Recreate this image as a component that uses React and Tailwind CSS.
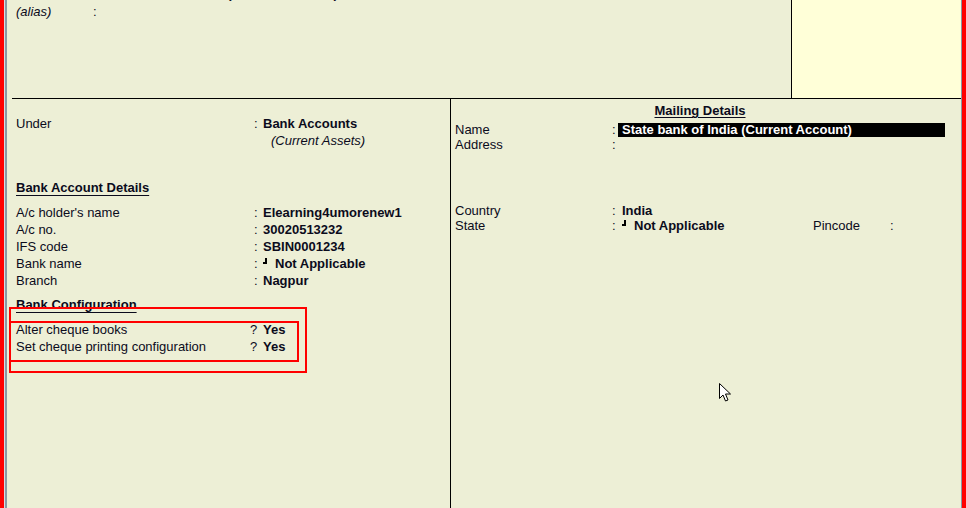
import React from 'react';

const font = { fontFamily: '"Liberation Sans", Arial, sans-serif' };

const Row = ({ label, sep = ':', children, labelW = 'w-[238px]' }) => (
  <div className="flex h-[17px] items-center leading-[17px]">
    <span className={`${labelW} shrink-0`}>{label}</span>
    <span className="w-[9px] shrink-0">{sep}</span>
    <span className="font-bold">{children}</span>
  </div>
);

// small "┘" marker Tally shows before lookup values
const Lookup = ({ children }) => (
  <>
    <span className="relative -top-[4px] mr-[8px] inline-block h-[6px] w-[4px] border-b-2 border-r-2 border-black align-middle" />
    {children}
  </>
);

const MailRow = ({ label, children }) => (
  <div className="flex h-[15px] items-center leading-[15px]">
    <span className="w-[157px] shrink-0">{label}</span>
    <span className="w-[6px] shrink-0">:</span>
    {children}
  </div>
);

const Cursor = () => (
  <svg className="absolute left-[719px] top-[383px]" width="13" height="21" viewBox="0 0 13 21">
    <path
      d="M0.5 0.5 L0.5 15.5 L4 12 L6.5 18 L9 17 L6.5 11 L11.5 11 Z"
      fill="#ffffff"
      stroke="#000000"
      strokeWidth="1"
      strokeLinejoin="miter"
    />
  </svg>
);

export default function App() {
  return (
    <div
      className="relative flex h-[508px] w-[966px] overflow-hidden bg-[#edefd6] text-[13px] text-[#0b0b1c]"
      style={font}
    >
      {/* left window frame */}
      <div className="w-[4px] shrink-0 bg-[#ff0000]" />
      <div className="w-[1px] shrink-0 bg-[#d8dce0]" />
      <div className="w-[2px] shrink-0 bg-[#8a97a4]" />

      <div className="flex min-w-0 flex-1 flex-col">
        {/* top: name / alias */}
        <div className="flex h-[98px] shrink-0">
          <div className="flex-1 overflow-hidden pl-[9px]">
            <div className="-mt-[15px] flex h-[17px] items-center leading-[17px]">
              <span className="w-[77px] shrink-0 font-bold">Name</span>
              <span className="w-[15px] shrink-0 font-bold">:</span>
              <span className="font-bold">State bank of India (Current Account)</span>
            </div>
            <div className="mt-[1px] flex h-[17px] items-center leading-[17px]">
              <span className="w-[77px] shrink-0 italic">(alias)</span>
              <span>:</span>
            </div>
          </div>
          <div className="w-[170px] shrink-0 border-l border-black bg-[#ffffd8]" />
        </div>
        <div className="ml-[5px] h-[1px] shrink-0 bg-black" />

        {/* bottom panels */}
        <div className="ml-[5px] flex flex-1">
          {/* left panel */}
          <div className="w-[439px] shrink-0 border-r border-black pl-[4px] pt-[16px]">
            <Row label="Under">Bank Accounts</Row>
            <div className="h-[17px] pl-[255px] italic leading-[17px]">(Current Assets)</div>

            <div className="mt-[30px] h-[17px] font-bold leading-[17px]">
              <span className="underline decoration-1 underline-offset-[3px]">Bank Account Details</span>
            </div>
            <div className="mt-[8px]">
              <Row label="A/c holder's name">Elearning4umorenew1</Row>
              <Row label="A/c no.">30020513232</Row>
              <Row label="IFS code">SBIN0001234</Row>
              <Row label="Bank name">
                <Lookup>Not Applicable</Lookup>
              </Row>
              <Row label="Branch">Nagpur</Row>
            </div>

            <div className="mt-[7px] h-[17px] font-bold leading-[17px]">
              <span className="underline decoration-1 underline-offset-[3px]">Bank Configuration</span>
            </div>
            <div className="mt-[8px]">
              <Row label="Alter cheque books" sep="?" labelW="w-[234px]">
                <span className="pl-[4px]">Yes</span>
              </Row>
              <Row label="Set cheque printing configuration" sep="?" labelW="w-[234px]">
                <span className="pl-[4px]">Yes</span>
              </Row>
            </div>
          </div>

          {/* right panel: mailing details */}
          <div className="flex-1 pl-[4px] pt-[4px]">
            <div className="h-[15px] pr-[16px] text-center font-bold leading-[15px]">
              <span className="underline decoration-1 underline-offset-[2px]">Mailing Details</span>
            </div>
            <div className="mt-[4px]">
              <MailRow label="Name">
                <span className="flex h-[14px] w-[327px] items-center bg-black pl-[4px] font-bold text-white">
                  State bank of India (Current Account)
                </span>
              </MailRow>
              <MailRow label="Address" />
            </div>
            <div className="mt-[51px]">
              <MailRow label="Country">
                <span className="pl-[4px] font-bold">India</span>
              </MailRow>
              <MailRow label="State">
                <span className="w-[195px] shrink-0 pl-[4px] font-bold">
                  <Lookup>Not Applicable</Lookup>
                </span>
                <span className="w-[77px] shrink-0">Pincode</span>
                <span>:</span>
              </MailRow>
            </div>
          </div>
        </div>
      </div>

      {/* right window frame */}
      <div className="w-[1px] shrink-0 bg-[#8a97a4]" />
      <div className="w-[4px] shrink-0 bg-[#ff0000]" />

      {/* annotation boxes */}
      <div className="absolute left-[9px] top-[307px] h-[66px] w-[298px] border-2 border-[#ff0000]" />
      <div className="absolute left-[9px] top-[321px] h-[41px] w-[290px] border-2 border-[#ff0000]" />

      <Cursor />
    </div>
  );
}
